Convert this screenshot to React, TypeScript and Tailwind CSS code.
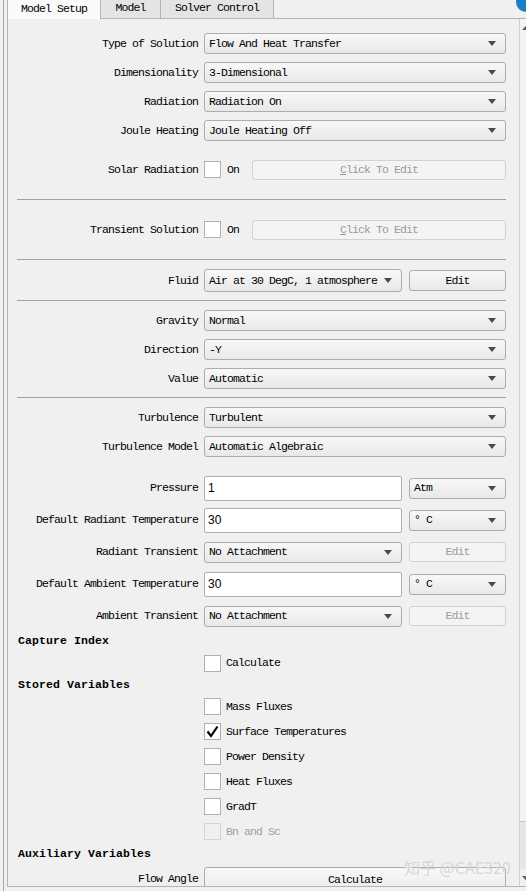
import React from "react";

const Arrow = () => (
  <svg width="8" height="5" viewBox="0 0 8 5" className="shrink-0">
    <path d="M0 0H8L4 5Z" fill="#4a4a4a" />
  </svg>
);

const Combo = ({ value, tall }: { value: string; tall?: boolean }) => (
  <div
    className={
      (tall ? "h-[23px] " : "h-[21px] ") +
      "flex items-center justify-between rounded-[3px] border border-[#acacac] bg-linear-to-b from-[#f8f8f8] to-[#e8e8e8] pl-[4px] pr-[9px]"
    }
  >
    <span className="whitespace-pre">{value}</span>
    <Arrow />
  </div>
);

const Input = ({ value }: { value: string }) => (
  <div className="h-[25px] flex items-center rounded-[2px] border border-[#abadb3] bg-white pl-[3px] font-['Liberation_Sans',sans-serif] text-[12px] tracking-normal">
    {value}
  </div>
);

const Button = ({ children, disabled }: { children: React.ReactNode; disabled?: boolean }) => (
  <div
    className={
      disabled
        ? "h-[20px] flex items-center justify-center rounded-[3px] border border-[#d2d2d2] bg-[#f4f4f4] text-[#9a9a9a]"
        : "h-[21px] flex items-center justify-center rounded-[3px] border border-[#acacac] bg-linear-to-b from-[#f8f8f8] to-[#e8e8e8]"
    }
  >
    {children}
  </div>
);

const Check = ({ checked, disabled }: { checked?: boolean; disabled?: boolean }) => (
  <div
    className={
      disabled
        ? "w-[17px] h-[17px] shrink-0 border border-[#d4d4d4] bg-[#f0f0f0]"
        : "w-[17px] h-[17px] shrink-0 border border-[#b0b0b0] bg-white flex items-center justify-center"
    }
  >
    {checked && (
      <svg width="13" height="13" viewBox="0 0 13 13">
        <path d="M1.5 6.5L5 11L11.5 1.5" fill="none" stroke="#000" strokeWidth="2.2" />
      </svg>
    )}
  </div>
);

const Row = ({ label, children, h }: { label: string; children: React.ReactNode; h: string }) => (
  <div className={"flex items-center " + h}>
    <div className="w-[180px] shrink-0 text-right whitespace-pre">{label}</div>
    <div className="ml-[6px] flex-1">{children}</div>
  </div>
);

const Sep = ({ mt }: { mt: string }) => <div className={"h-px bg-[#a0a0a0] -ml-px " + mt} />;

const Heading = ({ text }: { text: string }) => (
  <div className="h-[18px] flex items-center font-bold tracking-[0.1px]">{text}</div>
);

const CheckRow = ({ label, checked, disabled }: { label: string; checked?: boolean; disabled?: boolean }) => (
  <div className="h-[25px] flex items-center pl-[186px]">
    <Check checked={checked} disabled={disabled} />
    <span className={"ml-[5px] " + (disabled ? "text-[#a0a0a0]" : "")}>{label}</span>
  </div>
);

const ClickToEdit = () => (
  <Button disabled>
    <span>
      <span className="underline">C</span>lick To Edit
    </span>
  </Button>
);

export default function App() {
  return (
    <div className="relative w-[526px] h-[891px] overflow-hidden bg-[#f0f0f0] text-black font-['Liberation_Mono',monospace] text-[11.5px] tracking-[-0.9px] leading-none">
      <div className="flex h-full pl-[3px]">
        <div className="w-px shrink-0 bg-[#a8a8a8]" />
        <div className="w-[3px] shrink-0" />
        <div className="w-[530px] shrink-0 flex flex-col">
          {/* tabs */}
          <div className="h-[19px] flex shrink-0">
            <div className="w-[94px] border-x border-[#b4b4b4] bg-[#fafafa] flex items-center justify-center pb-[2px]">
              Model Setup
            </div>
            <div className="w-[60px] border-r border-b border-[#b4b4b4] bg-[#e4e4e4] flex items-center justify-center pb-[2px]">
              Model
            </div>
            <div className="w-[113px] border-r border-b border-[#b4b4b4] bg-[#e4e4e4] flex items-center justify-center pb-[2px]">
              Solver Control
            </div>
            <div className="flex-1 border-b border-[#b4b4b4]" />
          </div>

          {/* panel */}
          <div className="h-[868px] shrink-0 flex border-l border-b border-[#b4b4b4] overflow-hidden">
            <div className="w-[511px] shrink-0 pl-[10px] pr-[13px] overflow-hidden">
              <div className="mt-[10px]">
                <Row label="Type of Solution" h="h-[29px]">
                  <Combo value="Flow And Heat Transfer" />
                </Row>
                <Row label="Dimensionality" h="h-[29px]">
                  <Combo value="3-Dimensional" />
                </Row>
                <Row label="Radiation" h="h-[29px]">
                  <Combo value="Radiation On" />
                </Row>
                <Row label="Joule Heating" h="h-[29px]">
                  <Combo value="Joule Heating Off" />
                </Row>
              </div>

              <div className="mt-[10px]">
                <Row label="Solar Radiation" h="h-[29px]">
                  <div className="flex items-center">
                    <Check />
                    <span className="ml-[6px] w-[25px]">On</span>
                    <div className="flex-1">
                      <ClickToEdit />
                    </div>
                  </div>
                </Row>
              </div>
              <Sep mt="mt-[15px]" />
              <div className="mt-[15px]">
                <Row label="Transient Solution" h="h-[29px]">
                  <div className="flex items-center">
                    <Check />
                    <span className="ml-[6px] w-[25px]">On</span>
                    <div className="flex-1">
                      <ClickToEdit />
                    </div>
                  </div>
                </Row>
              </div>
              <Sep mt="mt-[15px]" />

              <div className="mt-[6px]">
                <Row label="Fluid" h="h-[29px]">
                  <div className="grid grid-cols-[198px_1fr] gap-[7px] items-center">
                    <Combo value="Air at 30 DegC, 1 atmosphere" tall />
                    <Button>Edit</Button>
                  </div>
                </Row>
              </div>
              <Sep mt="mt-[5px]" />

              <div className="mt-[5px]">
                <Row label="Gravity" h="h-[29px]">
                  <Combo value="Normal" />
                </Row>
                <Row label="Direction" h="h-[29px]">
                  <Combo value="-Y" />
                </Row>
                <Row label="Value" h="h-[29px]">
                  <Combo value="Automatic" />
                </Row>
              </div>
              <Sep mt="mt-[4px]" />

              <div className="mt-[5px]">
                <Row label="Turbulence" h="h-[29px]">
                  <Combo value="Turbulent" />
                </Row>
                <Row label="Turbulence Model" h="h-[29px]">
                  <Combo value="Automatic Algebraic" />
                </Row>
              </div>

              <div className="mt-[11px]">
                <Row label="Pressure" h="h-[32px]">
                  <div className="grid grid-cols-[198px_1fr] gap-[7px] items-center">
                    <Input value="1" />
                    <Combo value="Atm" />
                  </div>
                </Row>
                <Row label="Default Radiant Temperature" h="h-[32px]">
                  <div className="grid grid-cols-[198px_1fr] gap-[7px] items-center">
                    <Input value="30" />
                    <Combo value="° C" />
                  </div>
                </Row>
                <Row label="Radiant Transient" h="h-[32px]">
                  <div className="grid grid-cols-[198px_1fr] gap-[7px] items-center">
                    <Combo value="No Attachment" />
                    <Button disabled>Edit</Button>
                  </div>
                </Row>
                <Row label="Default Ambient Temperature" h="h-[32px]">
                  <div className="grid grid-cols-[198px_1fr] gap-[7px] items-center">
                    <Input value="30" />
                    <Combo value="° C" />
                  </div>
                </Row>
                <Row label="Ambient Transient" h="h-[32px]">
                  <div className="grid grid-cols-[198px_1fr] gap-[7px] items-center">
                    <Combo value="No Attachment" />
                    <Button disabled>Edit</Button>
                  </div>
                </Row>
              </div>

              <Heading text="Capture Index" />
              <div className="h-[26px] flex items-center pl-[186px]">
                <Check />
                <span className="ml-[5px]">Calculate</span>
              </div>
              <Heading text="Stored Variables" />
              <CheckRow label="Mass Fluxes" />
              <CheckRow label="Surface Temperatures" checked />
              <CheckRow label="Power Density" />
              <CheckRow label="Heat Fluxes" />
              <CheckRow label="GradT" />
              <CheckRow label="Bn and Sc" disabled />
              <div className="mt-px">
                <Heading text="Auxiliary Variables" />
              </div>
              <div className="mt-[4px] flex items-start">
                <div className="w-[180px] shrink-0 text-right pt-[6px]">Flow Angle</div>
                <div className="ml-[6px] flex-1">
                  <div className="h-[24px] flex items-center justify-center rounded-[3px] border border-[#acacac] bg-linear-to-b from-[#f8f8f8] to-[#ececec] pt-[2px]">
                    Calculate
                  </div>
                </div>
              </div>
            </div>

            {/* scrollbar */}
            <div className="w-[11px] shrink-0 flex flex-col border-l border-[#cfcfcf] bg-[#e6e6e6]">
              <div className="h-[17px] shrink-0 flex items-center justify-center bg-[#f4f4f4]">
                <svg width="7" height="4" viewBox="0 0 7 4">
                  <path d="M0 4H7L3.5 0Z" fill="#606060" />
                </svg>
              </div>
              <div className="h-[786px] shrink-0 bg-[#f2f2f2] border-b border-[#c8c8c8]" />
              <div className="flex-1" />
              <div className="h-[17px] shrink-0 flex items-center justify-center bg-[#f0f0f0]">
                <svg width="7" height="4" viewBox="0 0 7 4">
                  <path d="M0 0H7L3.5 4Z" fill="#606060" />
                </svg>
              </div>
            </div>
          </div>
        </div>
      </div>

      {/* top-right icon, partly out of view */}
      <div className="absolute left-[516px] top-[-8px] w-[20px] h-[20px] rounded-full bg-[#1a7ec6]" />

      {/* watermark */}
      <div className="absolute left-[404px] top-[859px] font-['Noto_Sans_CJK_SC',sans-serif] text-[16px] tracking-normal text-[#d6d6d6] whitespace-pre">
        知乎 @CAE320
      </div>
    </div>
  );
}
